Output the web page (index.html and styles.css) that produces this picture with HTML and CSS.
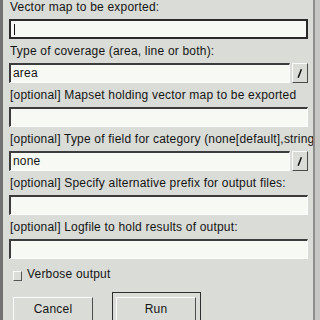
FILE: index.html
```html
<!DOCTYPE html>
<html lang="en">
<head>
  <meta charset="UTF-8">
  <title>v.out export</title>
  <link rel="stylesheet" href="styles.css">
</head>
<body>
  <div class="dialog">
    <div class="field">
      <div class="label">Vector map to be exported:</div>
      <div class="entry focus"><span class="cursor"></span></div>
    </div>

    <div class="field">
      <div class="label">Type of coverage (area, line or both):</div>
      <div class="combo">
        <div class="entry">area</div>
        <div class="combo-btn">
          <svg width="15" height="20" viewBox="0 0 15 20"><line x1="5.5" y1="15" x2="9" y2="6" stroke="#111" stroke-width="1.6"/></svg>
        </div>
      </div>
    </div>

    <div class="field">
      <div class="label">[optional] Mapset holding vector map to be exported</div>
      <div class="entry"></div>
    </div>

    <div class="field">
      <div class="label">[optional] Type of field for category (none[default],string</div>
      <div class="combo">
        <div class="entry">none</div>
        <div class="combo-btn">
          <svg width="15" height="20" viewBox="0 0 15 20"><line x1="5.5" y1="15" x2="9" y2="6" stroke="#111" stroke-width="1.6"/></svg>
        </div>
      </div>
    </div>

    <div class="field">
      <div class="label">[optional] Specify alternative prefix for output files:</div>
      <div class="entry"></div>
    </div>

    <div class="field">
      <div class="label">[optional] Logfile to hold results of output:</div>
      <div class="entry"></div>
    </div>

    <div class="check-row">
      <span class="check"></span>
      <span>Verbose output</span>
    </div>

    <div class="buttons">
      <div class="btn">Cancel</div>
      <div class="default-ring">
        <div class="btn">Run</div>
      </div>
    </div>
  </div>
</body>
</html>
```

FILE: styles.css
```css
body {
  margin: 0;
  background: #c6c7c5;
  font-family: "Liberation Sans", Arial, sans-serif;
  font-size: 12px;
  letter-spacing: 0.2px;
  color: #151515;
  overflow: hidden;
}
.dialog {
  width: 315px;
  height: 320px;
  box-sizing: border-box;
  background: #d9dcd7;
  border-left: 3px solid #717171;
  border-right: 2px solid #8d8d8d;
  padding: 0 5px 0 6px;
  display: flex;
  flex-direction: column;
  overflow: hidden;
}
.field {
  display: flex;
  flex-direction: column;
}
.label {
  line-height: 14px;
  margin: 5px 0 5px 1px;
  white-space: nowrap;
}
.field:first-child .label {
  margin-top: 0;
}
.entry {
  height: 20px;
  box-sizing: border-box;
  background: #f6f9f4;
  border-style: solid;
  border-width: 2px 1px 1px 2px;
  border-color: #3c3c3c #fbfbfb #fbfbfb #3c3c3c;
  line-height: 17px;
  padding-left: 2px;
  display: flex;
  align-items: center;
}
.entry.focus {
  border-width: 2px;
  border-color: #2a2a2a;
}
.cursor {
  width: 1px;
  height: 11px;
  background: #111;
  margin-left: 1px;
}
.combo {
  display: flex;
  gap: 2px;
}
.combo .entry {
  flex: 1;
}
.combo-btn {
  width: 16px;
  height: 20px;
  box-sizing: border-box;
  border: 1px solid;
  border-color: #fafafa #4a4a4a #4a4a4a #fafafa;
  display: flex;
  align-items: center;
  justify-content: center;
}
.combo-btn svg {
  display: block;
}
.check-row {
  display: flex;
  align-items: center;
  gap: 5px;
  margin: 8px 0 0 4px;
  line-height: 14px;
}
.check {
  width: 9px;
  height: 10px;
  box-sizing: border-box;
  border: 1px solid;
  border-color: #fbfbfb #555 #555 #fbfbfb;
  margin-top: 3px;
}
.buttons {
  display: flex;
  align-items: flex-start;
  gap: 19px;
  margin: 11px 0 0 4px;
}
.btn {
  width: 80px;
  height: 26px;
  box-sizing: border-box;
  border: 1px solid;
  border-color: #fbfbfb #4e4e4e #4e4e4e #fbfbfb;
  text-align: center;
  line-height: 18px;
  padding-top: 2px;
}
.buttons > .btn {
  margin-top: 5px;
}
.default-ring {
  border: 1px solid #2e2e2e;
  padding: 4px 4px 0 3px;
  height: 30px;
}
```
